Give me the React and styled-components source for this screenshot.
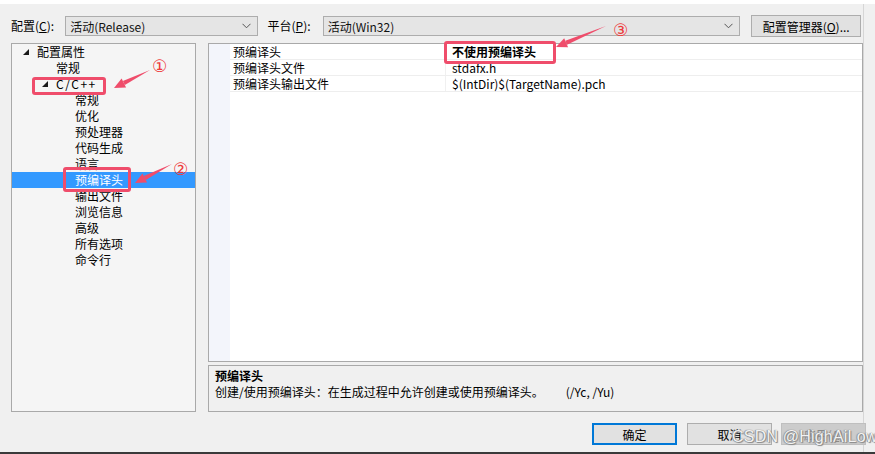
import React from "react";
import styled, { createGlobalStyle } from "styled-components";

const Global = createGlobalStyle`
  html, body { margin: 0; padding: 0; background: #f0f0f0; }
  body { font-family: "Noto Sans CJK SC", "Noto Sans", sans-serif; font-size: 12px; color: #000; }
  * { box-sizing: border-box; }
`;

const Frame = styled.div`
  position: relative;
  width: 875px;
  height: 454px;
  overflow: hidden;
  background: #f0f0f0;
  border-top: 4px solid #ffffff;
  border-bottom: 2px solid #3a3a3a;
`;

const Window = styled.div`
  width: 864px;
  height: 448px;
  padding: 11px 0 0 11px;
  display: flex;
  flex-direction: column;
  border-right: 1px solid #d6d6d6;
`;

const TopBar = styled.div`
  display: flex;
  align-items: center;
  height: 22px;
  padding-right: 2px;
`;

const Label = styled.span`
  font-size: 12px;
  line-height: 16px;
  margin-right: ${(p) => p.$mr || 0}px;
  margin-left: ${(p) => p.$ml || 0}px;
  white-space: nowrap;
  u { text-decoration: underline; }
`;

const Combo = styled.div`
  width: ${(p) => p.$w}px;
  height: 20px;
  background: #e5e5e5;
  border: 1px solid #adadad;
  display: flex;
  align-items: center;
  justify-content: space-between;
  padding: 0 6px 0 4px;
  font-size: 12px;
  color: #111;
`;

const Chevron = () => (
  <svg width="9" height="6" viewBox="0 0 9 6">
    <path d="M0.5 0.8 L4.5 4.8 L8.5 0.8" fill="none" stroke="#555" strokeWidth="1" />
  </svg>
);

const Button = styled.div`
  width: ${(p) => p.$w || 85}px;
  height: ${(p) => p.$h || 22}px;
  margin-left: ${(p) => p.$ml || 0}px;
  background: ${(p) => (p.$disabled ? "#cccccc" : "#e1e1e1")};
  border: ${(p) => (p.$primary ? "2px solid #0078d7" : "1px solid #adadad")};
  border-color: ${(p) => (p.$disabled ? "#bfbfbf" : p.$primary ? "#0078d7" : "#adadad")};
  color: ${(p) => (p.$disabled ? "#8a8a8a" : "#000")};
  display: flex;
  align-items: center;
  justify-content: center;
  font-size: 12px;
  white-space: nowrap;
  u { text-decoration: underline; }
`;

const Main = styled.div`
  display: flex;
  gap: 12px;
  margin-top: 6px;
  height: 369px;
`;

const TreePanel = styled.div`
  width: 185px;
  background: #f5f5f5;
  border: 1px solid #a9a9a9;
  display: flex;
  flex-direction: column;
`;

const TreeRow = styled.div`
  height: 16px;
  display: flex;
  align-items: center;
  padding-left: ${(p) => p.$indent}px;
  background: ${(p) => (p.$selected ? "#3399ff" : "transparent")};
  color: ${(p) => (p.$selected ? "#fff" : "#000")};
  font-size: 12px;
  line-height: 16px;
  white-space: nowrap;
`;

const TreeText = styled.span`
  letter-spacing: ${(p) => (p.$latin ? "1.5px" : "0")};
`;

const Toggle = styled.span`
  display: inline-flex;
  width: 14px;
  margin-left: -14px;
  align-items: center;
`;

const Expanded = () => (
  <svg width="6" height="6" viewBox="0 0 6 6">
    <path d="M6 0 L6 6 L0 6 Z" fill="#1a1a1a" />
  </svg>
);

const RightCol = styled.div`
  flex: 1;
  display: flex;
  flex-direction: column;
  gap: 3px;
`;

const Grid = styled.div`
  height: 319px;
  background: #ffffff;
  border: 1px solid #a9a9a9;
  display: flex;
`;

const Gutter = styled.div`
  width: 21px;
  background: #f3f5fb;
`;

const Rows = styled.div`
  flex: 1;
  display: flex;
  flex-direction: column;
`;

const PropRow = styled.div`
  display: grid;
  grid-template-columns: 216px 1fr;
  height: 16px;
  border-bottom: 1px solid #eeeeee;
  font-size: 12px;
  line-height: 15px;
`;

const PropName = styled.div`
  padding-left: 3px;
  border-right: 1px solid #f0f0f0;
  white-space: nowrap;
`;

const PropValue = styled.div`
  padding-left: 6px;
  font-weight: ${(p) => (p.$bold ? 700 : 400)};
  white-space: nowrap;
`;

const Desc = styled.div`
  height: 47px;
  border: 1px solid #a9a9a9;
  background: #f0f0f0;
  padding: 2px 6px;
  font-size: 12px;
  line-height: 16px;
`;

const DescTitle = styled.div`
  font-weight: 700;
`;

const DescText = styled.div`
  display: flex;
  white-space: nowrap;
`;

const Flags = styled.span`
  margin-left: 22px;
`;

const Footer = styled.div`
  display: flex;
  justify-content: flex-end;
  margin-top: 11px;
  margin-right: -3px;
`;

/* annotations overlaying the screenshot (coords relative to frame padding box, 4px below page top) */
const Mark = styled.div`
  position: absolute;
  left: ${(p) => p.$x}px;
  top: ${(p) => p.$y}px;
  width: ${(p) => p.$w}px;
  height: ${(p) => p.$h}px;
  border: 3px solid #ef4d6b;
  border-radius: 3px;
  pointer-events: none;
`;

const Num = styled.div`
  position: absolute;
  left: ${(p) => p.$x}px;
  top: ${(p) => p.$y}px;
  color: #ee3b3b;
  font-family: "DejaVu Sans", sans-serif;
  font-size: 17px;
  line-height: 18px;
`;

const Overlay = styled.svg`
  position: absolute;
  left: 0;
  top: 0;
  pointer-events: none;
`;

const Watermark = styled.div`
  position: absolute;
  left: 732px;
  top: 424px;
  font-family: "Liberation Sans", Arial, sans-serif;
  font-size: 16px;
  color: rgba(255, 255, 255, 0.92);
  text-shadow: 0 0 1px #777, 1px 1px 1px #888, -1px 0 1px #999;
  white-space: nowrap;
  letter-spacing: 0.2px;
`;

const Arrow = ({ x1, y1, x2, y2 }) => {
  const ang = Math.atan2(y2 - y1, x2 - x1);
  const L = 11;
  const W = 5;
  const bx = x2 - L * Math.cos(ang);
  const by = y2 - L * Math.sin(ang);
  const px = -Math.sin(ang);
  const py = Math.cos(ang);
  const head = `${x2},${y2} ${bx + px * W},${by + py * W} ${bx - px * W},${by - py * W}`;
  const tail = `${x1},${y1} ${bx + px * 2.2},${by + py * 2.2} ${bx - px * 2.2},${by - py * 2.2}`;
  return (
    <g fill="#ef4d6b">
      <polygon points={tail} />
      <polygon points={head} />
    </g>
  );
};

const tree = [
  { t: "配置属性", i: 25, toggle: true },
  { t: "常规", i: 44 },
  { t: "C/C++", i: 44, toggle: true, latin: true },
  { t: "常规", i: 63 },
  { t: "优化", i: 63 },
  { t: "预处理器", i: 63 },
  { t: "代码生成", i: 63 },
  { t: "语言", i: 63 },
  { t: "预编译头", i: 63, sel: true },
  { t: "输出文件", i: 63 },
  { t: "浏览信息", i: 63 },
  { t: "高级", i: 63 },
  { t: "所有选项", i: 63 },
  { t: "命令行", i: 63 },
];

const props = [
  { n: "预编译头", v: "不使用预编译头", b: true },
  { n: "预编译头文件", v: "stdafx.h" },
  { n: "预编译头输出文件", v: "$(IntDir)$(TargetName).pch" },
];

export default function App() {
  return (
    <>
      <Global />
      <Frame>
        <Window>
          <TopBar>
            <Label $mr={11}>配置(<u>C</u>):</Label>
            <Combo $w={193}>
              <span>活动(Release)</span>
              <Chevron />
            </Combo>
            <Label $ml={10} $mr={12}>平台(<u>P</u>):</Label>
            <Combo $w={419}>
              <span>活动(Win32)</span>
              <Chevron />
            </Combo>
            <Button $w={110} $ml={11}>配置管理器(<u>O</u>)...</Button>
          </TopBar>
          <Main>
            <TreePanel>
              {tree.map((r, k) => (
                <TreeRow key={k} $indent={r.i} $selected={r.sel}>
                  {r.toggle && (
                    <Toggle>
                      <Expanded />
                    </Toggle>
                  )}
                  <TreeText $latin={r.latin}>{r.t}</TreeText>
                </TreeRow>
              ))}
            </TreePanel>
            <RightCol>
              <Grid>
                <Gutter />
                <Rows>
                  {props.map((p, k) => (
                    <PropRow key={k}>
                      <PropName>{p.n}</PropName>
                      <PropValue $bold={p.b}>{p.v}</PropValue>
                    </PropRow>
                  ))}
                </Rows>
              </Grid>
              <Desc>
                <DescTitle>预编译头</DescTitle>
                <DescText>
                  <span>创建/使用预编译头：在生成过程中允许创建或使用预编译头。</span>
                  <Flags>(/Yc, /Yu)</Flags>
                </DescText>
              </Desc>
            </RightCol>
          </Main>
          <Footer>
            <Button $primary>确定</Button>
            <Button $ml={10}>取消</Button>
            <Button $ml={9} $disabled>应用(<u>A</u>)</Button>
          </Footer>
        </Window>

        <Mark $x={32} $y={73} $w={74} $h={18} />
        <Mark $x={63} $y={163} $w={68} $h={25} />
        <Mark $x={444} $y={37} $w={112} $h={23} />
        <Overlay width="875" height="450">
          <Arrow x1={150} y1={66} x2={114} y2={84} />
          <Arrow x1={172} y1={160} x2={135} y2={179} />
          <Arrow x1={606} y1={22} x2={556} y2={43} />
        </Overlay>
        <Num $x={152} $y={53}>①</Num>
        <Num $x={173} $y={156}>②</Num>
        <Num $x={613} $y={17}>③</Num>
        <Watermark>CSDN @HighAiLow</Watermark>
      </Frame>
    </>
  );
}
